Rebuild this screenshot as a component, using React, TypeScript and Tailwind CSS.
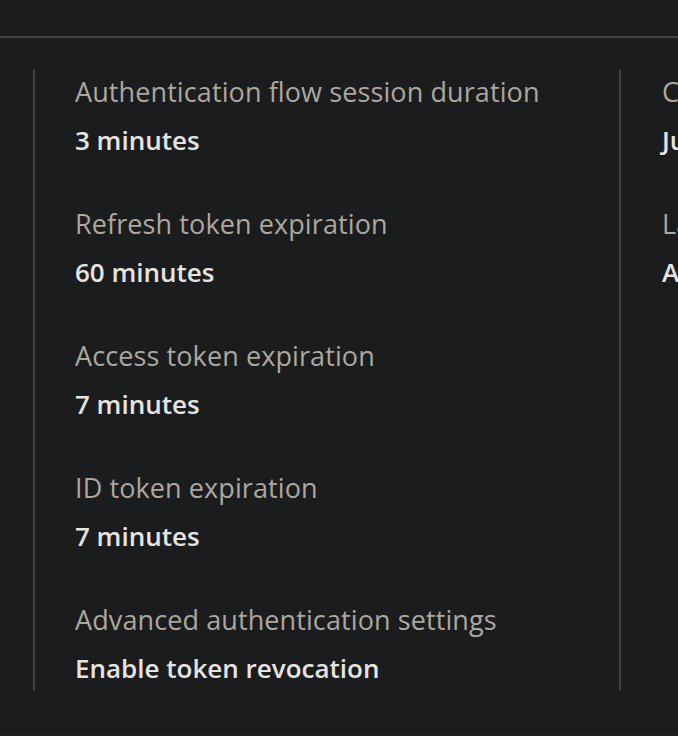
import React from 'react';

interface Field {
  label: string;
  value: string;
}

const leftFields: Field[] = [
  { label: 'Authentication flow session duration', value: '3 minutes' },
  { label: 'Refresh token expiration', value: '60 minutes' },
  { label: 'Access token expiration', value: '7 minutes' },
  { label: 'ID token expiration', value: '7 minutes' },
  { label: 'Advanced authentication settings', value: 'Enable token revocation' },
];

const rightFields: Field[] = [
  { label: 'Created time', value: 'June 14, 2024 at 10:32 GMT+2' },
  { label: 'Last updated time', value: 'August 2, 2024 at 16:05 GMT+2' },
];

function FieldList({ fields }: { fields: Field[] }) {
  return (
    <div className="flex flex-col gap-[40px]">
      {fields.map((field) => (
        <div key={field.label} className="flex flex-col gap-1">
          <div className="text-[27px] leading-[44px] tracking-[0.1px] text-[#aca79f] whitespace-nowrap">{field.label}</div>
          <div className="text-[26px] leading-[44px] font-semibold text-[#e6e4e0] whitespace-nowrap">{field.value}</div>
        </div>
      ))}
    </div>
  );
}

export default function App() {
  return (
    <div
      className="w-full h-[736px] bg-[#1b1c1e] overflow-hidden flex flex-col"
      style={{ fontFamily: '"Open Sans", "Liberation Sans", sans-serif' }}
    >
      {/* Header strip */}
      <div className="h-[38px] shrink-0 border-b-2 border-[#3f4145]" />

      {/* Details */}
      <div className="flex pl-[33px] pt-[32px] flex-1 min-w-0">
        <div className="w-[586px] shrink-0 border-l-2 border-[#3f4145] pl-[40px] self-start">
          <FieldList fields={leftFields} />
        </div>
        <div className="border-l-2 border-[#3f4145] pl-[41px] self-start h-[620px]">
          <FieldList fields={rightFields} />
        </div>
      </div>

      <div className="h-[6px] shrink-0 border-t border-[#151618] bg-[#1d1e20]" />
    </div>
  );
}
